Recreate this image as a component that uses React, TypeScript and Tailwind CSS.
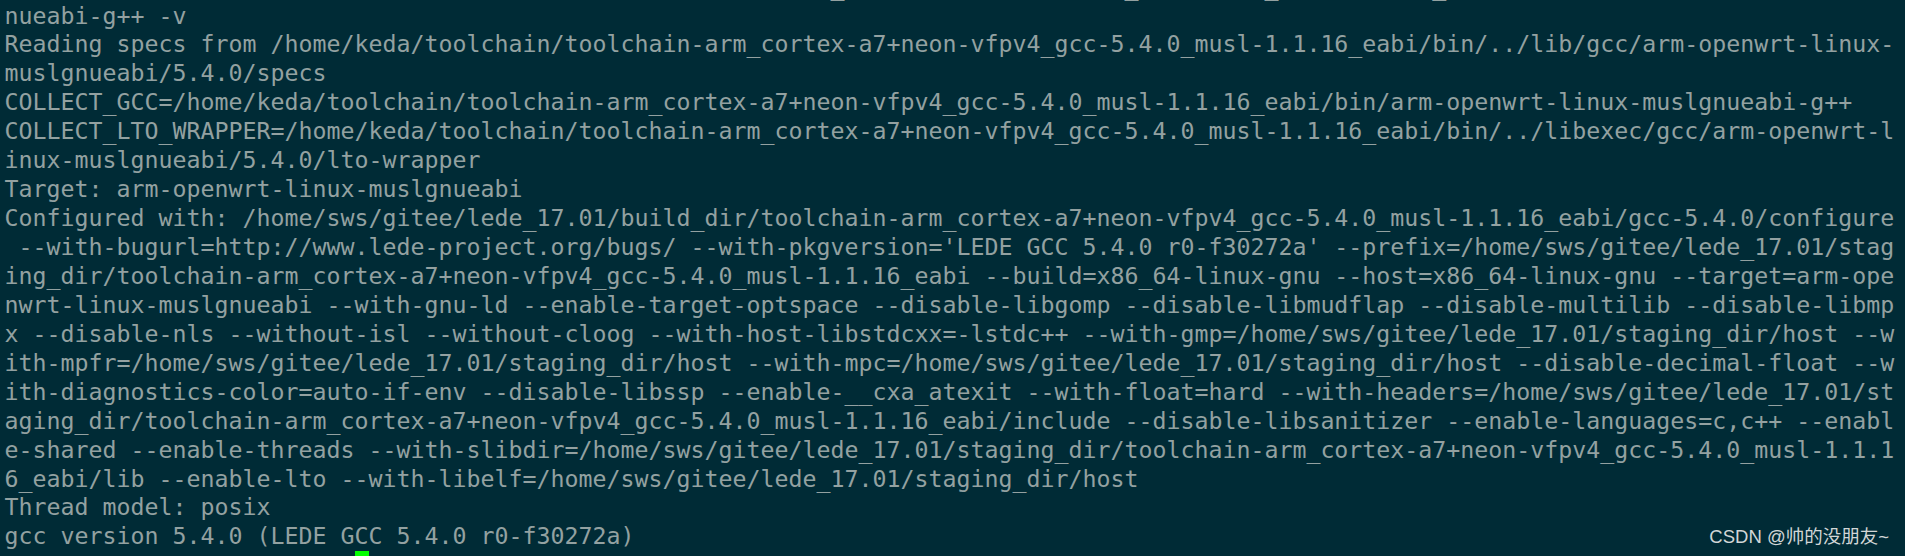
import React from "react";

const lines: string[] = [
  "nueabi-g++ -v",
  "Reading specs from /home/keda/toolchain/toolchain-arm_cortex-a7+neon-vfpv4_gcc-5.4.0_musl-1.1.16_eabi/bin/../lib/gcc/arm-openwrt-linux-",
  "muslgnueabi/5.4.0/specs",
  "COLLECT_GCC=/home/keda/toolchain/toolchain-arm_cortex-a7+neon-vfpv4_gcc-5.4.0_musl-1.1.16_eabi/bin/arm-openwrt-linux-muslgnueabi-g++",
  "COLLECT_LTO_WRAPPER=/home/keda/toolchain/toolchain-arm_cortex-a7+neon-vfpv4_gcc-5.4.0_musl-1.1.16_eabi/bin/../libexec/gcc/arm-openwrt-l",
  "inux-muslgnueabi/5.4.0/lto-wrapper",
  "Target: arm-openwrt-linux-muslgnueabi",
  "Configured with: /home/sws/gitee/lede_17.01/build_dir/toolchain-arm_cortex-a7+neon-vfpv4_gcc-5.4.0_musl-1.1.16_eabi/gcc-5.4.0/configure",
  " --with-bugurl=http://www.lede-project.org/bugs/ --with-pkgversion='LEDE GCC 5.4.0 r0-f30272a' --prefix=/home/sws/gitee/lede_17.01/stag",
  "ing_dir/toolchain-arm_cortex-a7+neon-vfpv4_gcc-5.4.0_musl-1.1.16_eabi --build=x86_64-linux-gnu --host=x86_64-linux-gnu --target=arm-ope",
  "nwrt-linux-muslgnueabi --with-gnu-ld --enable-target-optspace --disable-libgomp --disable-libmudflap --disable-multilib --disable-libmp",
  "x --disable-nls --without-isl --without-cloog --with-host-libstdcxx=-lstdc++ --with-gmp=/home/sws/gitee/lede_17.01/staging_dir/host --w",
  "ith-mpfr=/home/sws/gitee/lede_17.01/staging_dir/host --with-mpc=/home/sws/gitee/lede_17.01/staging_dir/host --disable-decimal-float --w",
  "ith-diagnostics-color=auto-if-env --disable-libssp --enable-__cxa_atexit --with-float=hard --with-headers=/home/sws/gitee/lede_17.01/st",
  "aging_dir/toolchain-arm_cortex-a7+neon-vfpv4_gcc-5.4.0_musl-1.1.16_eabi/include --disable-libsanitizer --enable-languages=c,c++ --enabl",
  "e-shared --enable-threads --with-slibdir=/home/sws/gitee/lede_17.01/staging_dir/toolchain-arm_cortex-a7+neon-vfpv4_gcc-5.4.0_musl-1.1.1",
  "6_eabi/lib --enable-lto --with-libelf=/home/sws/gitee/lede_17.01/staging_dir/host",
  "Thread model: posix",
  "gcc version 5.4.0 (LEDE GCC 5.4.0 r0-f30272a)",
];

// partially visible line above the top edge (only its lowest pixels show)
const topLine =
  "                         /home/keda/toolchain/toolchain-arm_cortex-a7+neon-vfpv4_gcc-5.4.0_musl-1.1.16_eabi/bin/arm-openwrt-linux-muslg";

export default function App() {
  return (
    <div className="relative h-[556px] w-full overflow-hidden bg-[#002b36]">
      <div
        className="mt-[-27.44px] flex flex-col pl-[4.6px] text-[23.25px] leading-[28.94px] text-[#93a1a1]"
        style={{ fontFamily: '"DejaVu Sans Mono", monospace' }}
      >
        <div className="h-[28.94px] whitespace-pre" aria-hidden="true">
          {topLine}
        </div>
        {lines.map((l, i) => (
          <div key={i} className="h-[28.94px] whitespace-pre">
            {l}
          </div>
        ))}
        <div className="h-[28.94px]">
          <div className="ml-[350px] h-full w-[14px] bg-[#00ff00]" />
        </div>
      </div>
      <div
        className="absolute bottom-[10px] right-[16px] text-[18.5px] leading-none text-[#d2d6d6]"
        style={{ fontFamily: '"Liberation Sans", "Noto Sans CJK SC", sans-serif' }}
      >
        CSDN @帅的没朋友~
      </div>
    </div>
  );
}
